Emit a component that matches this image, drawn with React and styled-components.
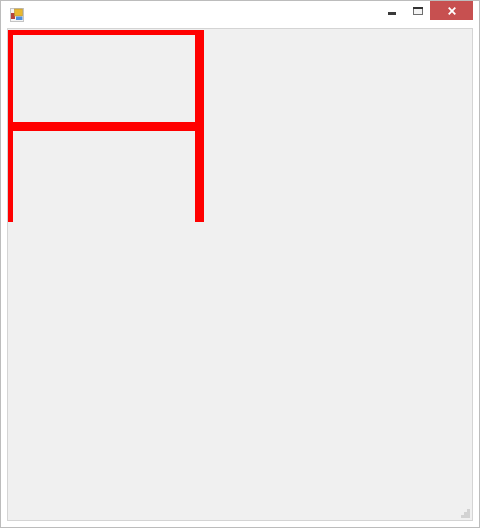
import React from 'react';
import styled, {createGlobalStyle} from 'styled-components';

const GlobalStyle = createGlobalStyle`
  html, body {
    margin: 0;
    padding: 0;
    background: #ffffff;
  }
`;

const Window = styled.div`
  box-sizing: border-box;
  width: 480px;
  height: 528px;
  display: flex;
  flex-direction: column;
  background: #ffffff;
  border: 1px solid #bcbcbc;
  padding: 0 6px 6px;
`;

const TitleBar = styled.div`
  height: 27px;
  flex: none;
  display: flex;
  align-items: flex-start;
`;

const AppIcon = styled.svg`
  width: 14px;
  height: 14px;
  margin: 7px 0 0 3px;
`;

const Controls = styled.div`
  margin-left: auto;
  display: flex;
  align-items: flex-start;
`;

const ControlButton = styled.div`
  width: ${p => p.$w}px;
  height: 19px;
  display: flex;
  align-items: center;
  justify-content: center;
  background: ${p => p.$close ? '#c75050' : 'transparent'};
`;

const MinimizeGlyph = styled.svg`
  width: 8px;
  height: 3px;
  margin: 5px 0 0 4px;
`;

const RestoreGlyph = styled.svg`
  width: 10px;
  height: 8px;
  margin: 1px 0 0 2px;
`;

const Panel = styled.div`
  flex: 1;
  position: relative;
  background: #f0f0f0;
  border: 1px solid #d4d4d4;
  padding: 1px 0 0;
`;

const Shape = styled.svg`
  display: block;
  width: 197px;
  height: 192px;
`;

const Grip = styled.svg`
  position: absolute;
  right: 2px;
  bottom: 2px;
  width: 9px;
  height: 9px;
`;

const gripDots = [[6, 0], [3, 3], [6, 3], [0, 6], [3, 6], [6, 6]];

const App = () => (
  <Window>
    <GlobalStyle />
    <TitleBar>
      <AppIcon viewBox="0 0 14 14">
        <rect x="0.5" y="0.5" width="13" height="13" fill="#f4f4f4" stroke="#c4c4c4" />
        <rect x="1" y="5" width="4" height="6" fill="#b5423c" />
        <rect x="4.5" y="1" width="8" height="7" fill="#e8b830" stroke="#b58f35" strokeWidth="0.6" />
        <rect x="6" y="8.5" width="6.5" height="3.5" fill="#4f8fdc" />
      </AppIcon>
      <Controls>
        <ControlButton $w={26}>
          <MinimizeGlyph viewBox="0 0 8 3"><rect width="8" height="3" fill="#3a3a3a" /></MinimizeGlyph>
        </ControlButton>
        <ControlButton $w={27}>
          <RestoreGlyph viewBox="0 0 10 8">
            <rect x="0.5" y="0.5" width="9" height="7" fill="#f4f4f4" stroke="#6e6e6e" />
            <rect x="0" y="0" width="10" height="2" fill="#333" />
          </RestoreGlyph>
        </ControlButton>
        <ControlButton $w={43} $close>
          <svg width="8" height="8" viewBox="0 0 8 8">
            <path d="M0.7 0.7 L7.3 7.3 M7.3 0.7 L0.7 7.3" stroke="#fff" strokeWidth="1.8" />
          </svg>
        </ControlButton>
      </Controls>
    </TitleBar>
    <Panel>
      <Shape viewBox="0 0 197 192">
        <path d="M0 0 H196 V192 H187 V101 H5 V192 H0 Z M5 5 V92 H187 V5 Z" fill="#ff0000" fillRule="evenodd" />
      </Shape>
      <Grip viewBox="0 0 9 9">
        {gripDots.map(([x, y]) => (
          <rect key={`${x}-${y}`} x={x} y={y} width="3" height="3" fill="#d2d2d2" />
        ))}
      </Grip>
    </Panel>
  </Window>
);

export default App;
